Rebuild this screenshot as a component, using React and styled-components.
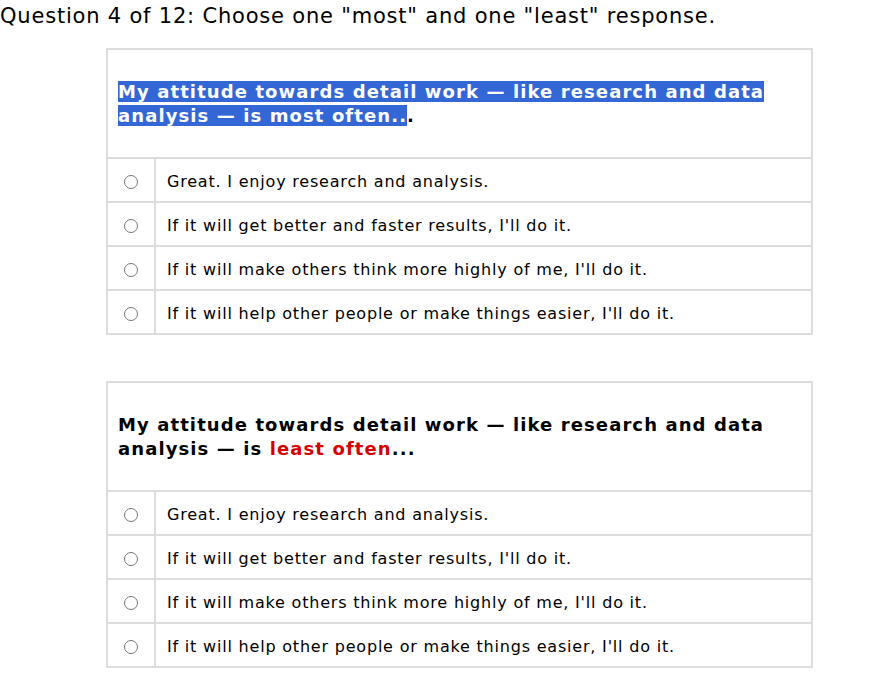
import React from "react";
import styled, { createGlobalStyle } from "styled-components";

const Global = createGlobalStyle`
  html, body { margin: 0; padding: 0; background: #fff; }
  body { font-family: Verdana, "DejaVu Sans", sans-serif; color: #000; }
`;

const Page = styled.div`
  display: flex;
  flex-direction: column;
  padding: 0 0 20px 0;
`;

const Title = styled.h1`
  margin: 0;
  padding-top: 3px;
  font-size: 21px;
  letter-spacing: 0.8px;
  font-weight: normal;
  line-height: 26px;
  white-space: nowrap;
`;

const Stack = styled.div`
  display: flex;
  flex-direction: column;
  gap: 46px;
  margin: 19px 0 0 106px;
`;

const Table = styled.table`
  width: 707px;
  border-collapse: collapse;
  border: 2px solid #dddddd;
`;

const HeadCell = styled.td`
  height: 107px;
  padding: 0 10px;
  border: 2px solid #dddddd;
  font-size: 18px;
  letter-spacing: 1.1px;
  font-weight: bold;
  line-height: 24px;
`;

const Selected = styled.span`
  background: #3367d6;
  color: #fff;
`;

const Red = styled.span`
  color: #d40000;
`;

const RadioCell = styled.td`
  width: 46px;
  height: 42px;
  padding: 0;
  border: 2px solid #dddddd;
  text-align: center;
  vertical-align: middle;
`;

const Radio = styled.input`
  margin: 2px 0 0 0;
  width: 14px;
  height: 14px;
  vertical-align: middle;
`;

const TextCell = styled.td`
  padding: 3px 10px 0 11px;
  border: 2px solid #dddddd;
  font-size: 16px;
  letter-spacing: 0.8px;
  line-height: 20px;
  vertical-align: middle;
`;

const answers = [
  "Great. I enjoy research and analysis.",
  "If it will get better and faster results, I'll do it.",
  "If it will make others think more highly of me, I'll do it.",
  "If it will help other people or make things easier, I'll do it.",
];

function Question({ name, children }) {
  return (
    <Table>
      <tbody>
        <tr>
          <HeadCell colSpan={2}>{children}</HeadCell>
        </tr>
        {answers.map((a, i) => (
          <tr key={i}>
            <RadioCell>
              <Radio type="radio" name={name} />
            </RadioCell>
            <TextCell>{a}</TextCell>
          </tr>
        ))}
      </tbody>
    </Table>
  );
}

export default function App() {
  return (
    <>
      <Global />
      <Page>
        <Title>Question 4 of 12: Choose one "most" and one "least" response.</Title>
        <Stack>
          <Question name="most">
            <Selected>
              My attitude towards detail work — like research and data analysis — is most often..
            </Selected>
            .
          </Question>
          <Question name="least">
            My attitude towards detail work — like research and data analysis — is <Red>least often</Red>...
          </Question>
        </Stack>
      </Page>
    </>
  );
}
